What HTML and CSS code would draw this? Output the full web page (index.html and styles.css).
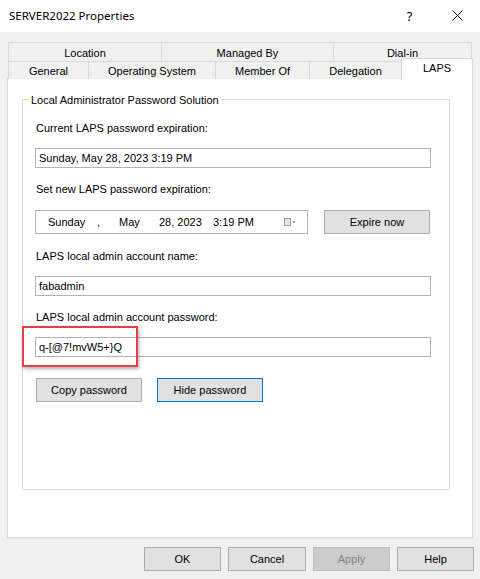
FILE: index.html
```
<!DOCTYPE html>
<html>
<head>
<meta charset="utf-8">
<link rel="stylesheet" href="styles.css">
</head>
<body>
<div class="titlebar">
  <span class="title">SERVER2022 Properties</span>
  <span class="tb-btn">?</span>
  <span class="tb-btn close"><svg width="11" height="11" viewBox="0 0 11 11"><path d="M0.5 0.5 L10.5 10.5 M10.5 0.5 L0.5 10.5" stroke="#000" stroke-width="1" fill="none"/></svg></span>
</div>
<div class="window">
  <div class="tabs">
    <div class="tab-row row1">
      <div class="tab t-loc">Location</div>
      <div class="tab t-man">Managed By</div>
      <div class="tab t-dial last">Dial-in</div>
    </div>
    <div class="tab-row row2">
      <div class="tab t-gen">General</div>
      <div class="tab t-os">Operating System</div>
      <div class="tab t-mem">Member Of</div>
      <div class="tab t-del">Delegation</div>
      <div class="tab t-laps">LAPS</div>
    </div>
  </div>
  <div class="panel">
    <div class="group">
      <span class="group-title">Local Administrator Password Solution</span>
      <div class="label l1">Current LAPS password expiration:</div>
      <div class="field">Sunday, May 28, 2023 3:19 PM</div>
      <div class="label">Set new LAPS password expiration:</div>
      <div class="date-row">
        <div class="datepicker">
          <span class="seg s-day">Sunday</span>
          <span class="seg s-comma">,</span>
          <span class="seg s-month">May</span>
          <span class="seg s-date">28, 2023</span>
          <span class="seg s-time">3:19 PM</span>
          <svg class="cal" width="13" height="9" viewBox="0 0 13 9"><rect x="0.5" y="0.5" width="6" height="7" fill="#e6e6e6" stroke="#a0a0a0"/><path d="M8.5 3.5 L11.5 3.5 L10 5 Z" fill="#555"/></svg>
        </div>
        <div class="btn wide">Expire now</div>
      </div>
      <div class="label l3">LAPS local admin account name:</div>
      <div class="field">fabadmin</div>
      <div class="label">LAPS local admin account password:</div>
      <div class="field pw">q-[@7!mvW5+}Q<span class="highlight"></span></div>
      <div class="btn-row">
        <div class="btn wide copy">Copy password</div>
        <div class="btn wide focus">Hide password</div>
      </div>
    </div>
  </div>
  <div class="footer">
    <div class="btn fb">OK</div>
    <div class="btn fb cancel">Cancel</div>
    <div class="btn fb disabled">Apply</div>
    <div class="btn fb">Help</div>
  </div>
</div>
</body>
</html>
```
FILE: styles.css
```
* { box-sizing: border-box; }
html, body { margin: 0; padding: 0; }
body {
  width: 480px;
  height: 579px;
  overflow: hidden;
  background: #f0f0f0;
  font-family: "Liberation Sans", Arial, sans-serif;
  font-size: 11px;
  color: #000;
}
.titlebar {
  height: 32px;
  background: #fff;
  display: flex;
  align-items: center;
  padding-left: 9px;
  padding-bottom: 1px;
  font-family: "Noto Sans", "Liberation Sans", sans-serif;
  font-size: 11.5px;
}
.title { flex: 1; }
.tb-btn {
  width: 46px;
  height: 32px;
  display: flex;
  align-items: center;
  justify-content: center;
  font-size: 13px;
  padding-right: 3px;
}
.tb-btn.close { padding-right: 0; }
.window { padding: 10px 7px 0 7px; }
.tabs { padding-left: 1px; }
.tab-row { display: flex; }
.tab {
  display: flex;
  align-items: center;
  justify-content: center;
  border-left: 1px solid #d9d9d9;
  border-top: 1px solid #d9d9d9;
  background: #f0f0f0;
}
.tab.last { border-right: 1px solid #d9d9d9; }
.row1 { height: 19px; }
.row1 .tab { padding-top: 1px; }
.row2 { height: 18px; }
.t-loc { width: 153px; }
.t-man { width: 172px; }
.t-dial { width: 139px; }
.t-gen { width: 80px; }
.t-os { width: 127px; }
.t-mem { width: 94px; }
.t-del { width: 92px; }
.t-laps {
  width: 72px;
  height: 22px;
  margin-top: -3px;
  background: #fff;
  border-right: 1px solid #d9d9d9;
  position: relative;
  z-index: 1;
  align-items: flex-start;
  padding-top: 3px;
}
.panel {
  width: 466px;
  height: 460px;
  background: #fff;
  border: 1px solid #d9d9d9;
  margin-top: -1px;
  padding: 20px 22px 0 14px;
}
.group {
  height: 391px;
  border: 1px solid #dcdcdc;
  padding: 0 18px 0 12px;
}
.group-title {
  display: block;
  width: fit-content;
  margin: -7px 0 0 -6px;
  padding: 0 2px;
  background: #fff;
  line-height: 14px;
}
.label {
  line-height: 14px;
  margin-top: 14px;
  padding-left: 1px;
}
.label.l3 { margin-top: 15px; }
.field {
  margin-top: 13px;
  width: 396px;
  height: 20px;
  border: 1px solid #b4b4b4;
  padding-left: 3px;
  line-height: 18px;
}
.field.pw { position: relative; }
.highlight {
  position: absolute;
  left: -14px;
  top: -12px;
  width: 116px;
  height: 41px;
  border: 2px solid #e5403f;
  box-shadow: 1px 2px 4px rgba(0, 0, 0, 0.3);
}
.date-row {
  display: flex;
  gap: 16px;
  margin-top: 14px;
}
.datepicker {
  width: 273px;
  height: 24px;
  border: 1px solid #b4b4b4;
  display: flex;
  align-items: center;
  padding-left: 12px;
  white-space: nowrap;
}
.seg { display: inline-block; }
.s-day { width: 49px; }
.s-comma { width: 22px; }
.s-month { width: 40px; }
.s-date { width: 54px; }
.s-time { width: 71px; }
.cal { margin-top: 1px; }
.btn {
  height: 24px;
  background: #e1e1e1;
  border: 1px solid #adadad;
  display: flex;
  align-items: center;
  justify-content: center;
}
.btn.wide { width: 106px; }
.btn.focus { border-color: #0078d7; }
.btn-row {
  display: flex;
  gap: 15px;
  margin-top: 21px;
  padding-left: 1px;
}
.footer {
  display: flex;
  justify-content: flex-end;
  gap: 7px;
  margin-top: 9px;
  margin-right: -1px;
}
.btn.fb { width: 77px; }
.btn.fb.cancel { width: 78px; }
.btn.disabled {
  background: #cccccc;
  border-color: #bfbfbf;
  color: #838383;
}
```
